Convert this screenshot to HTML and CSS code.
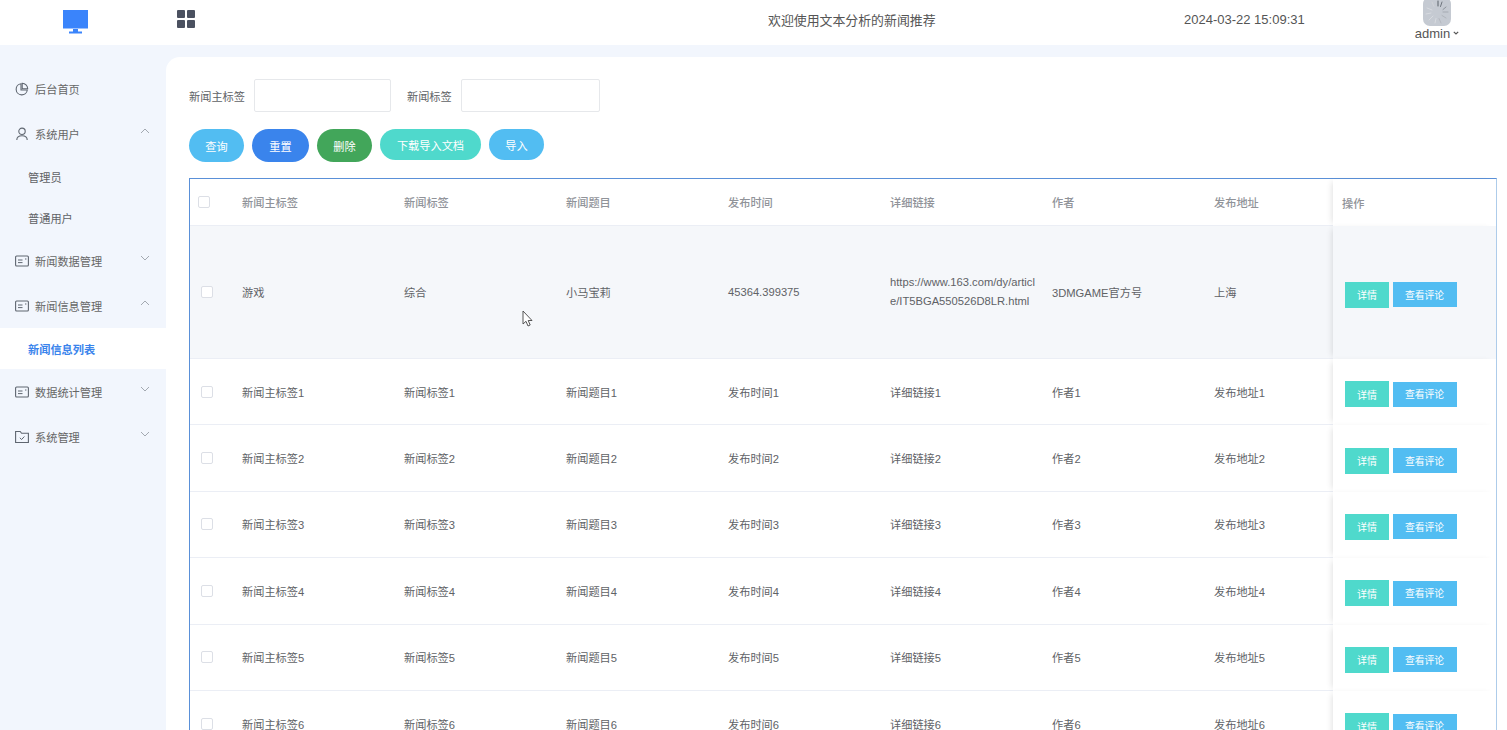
FILE: index.html
```html
<!DOCTYPE html>
<html lang="zh">
<head>
<meta charset="utf-8">
<title>欢迎使用文本分析的新闻推荐</title>
<link rel="stylesheet" href="styles.css">
</head>
<body>
<svg width="0" height="0" class="defs">
  <symbol id="card" viewBox="0 0 14 12"><rect x=".6" y="1" width="12.8" height="10" rx="1" fill="none" stroke="currentColor" stroke-width="1.1"/><path d="M3 5h4.5M3 7.6h4.5" stroke="currentColor" stroke-width="1"/><path d="M10 4h1.4" stroke="currentColor" stroke-width="1.2"/></symbol>
  <symbol id="up" viewBox="0 0 10 6"><path d="M1 5l4-4 4 4" fill="none" stroke="currentColor" stroke-width=".9"/></symbol>
  <symbol id="down" viewBox="0 0 10 6"><path d="M1 1l4 4 4-4" fill="none" stroke="currentColor" stroke-width=".9"/></symbol>
</svg>
<header class="topbar">
  <div class="logo">
    <svg width="26" height="26" viewBox="0 0 26 26"><rect x="0" y="0" width="25" height="18.500" fill="#3a84fb"/><path d="M10 19h5v2.500h4v2H6v-2h4z" fill="#3a84fb"/></svg>
  </div>
  <svg class="apps" width="18" height="18" viewBox="0 0 18 18"><g fill="#4b5160"><rect width="8" height="8" rx="1"/><rect x="10" width="8" height="8" rx="1"/><rect y="10" width="8" height="8" rx="1"/><rect x="10" y="10" width="8" height="8" rx="1"/></g></svg>
  <div class="title">欢迎使用文本分析的新闻推荐</div>
  <div class="clock">2024-03-22 15:09:31</div>
  <div class="user">
    <svg class="avatar" width="28" height="26" viewBox="0 0 28 26"><rect x="0" y="-3" width="28" height="29" rx="7" fill="#c5cad2"/><g stroke-width="1" stroke-linecap="round"><path d="M15 1v5" stroke="#596069"/><path d="M19 2l-1.500 4.500" stroke="#6f757e"/><path d="M23 7l-3 2.500" stroke="#8d939b"/><path d="M25 12h-5" stroke="#a5aab2"/><path d="M23 18l-4-2.500" stroke="#b0b5bc"/><path d="M18 23l-2-4.500" stroke="#b5b9c0"/><path d="M12 23l1-4.500" stroke="#d8dbe0"/><path d="M6 20l4-4" stroke="#d8dbe0"/><path d="M3 14l5-1" stroke="#d8dbe0"/><path d="M4 8l5 2" stroke="#d8dbe0"/><path d="M9 2l2 4.500" stroke="#d0d3d8"/></g></svg>
    <div class="uname">admin<svg class="caret" width="6" height="4" viewBox="0 0 6 4"><path d="M.8.800L3 3l2.200-2.200" fill="none" stroke="#555" stroke-width="1.200"/></svg></div>
  </div>
</header>
<div class="shell">
  <aside class="side">
    <a class="nav">
      <svg class="ic" width="14" height="14" viewBox="0 0 14 14"><path d="M6 1.700a5.600 5.600 0 1 0 6.300 6.300H6z" fill="none" stroke="currentColor" stroke-width="1.100"/><path d="M7.800.700a5.600 5.600 0 0 1 5.500 5.500H7.800z" fill="none" stroke="currentColor" stroke-width="1.100" transform="translate(-.6 .6)"/></svg>
      <span>后台首页</span>
    </a>
    <a class="nav">
      <svg class="ic" width="14" height="14" viewBox="0 0 14 14"><circle cx="7" cy="4.300" r="3.200" fill="none" stroke="currentColor" stroke-width="1.100"/><path d="M1.800 13c0-3 2-4.300 5.200-4.300s5.200 1.300 5.200 4.300" fill="none" stroke="currentColor" stroke-width="1.100"/></svg>
      <span>系统用户</span>
      <svg class="arrow"><use href="#up"/></svg>
    </a>
    <a class="sub">管理员</a>
    <a class="sub">普通用户</a>
    <a class="nav"><svg class="ic"><use href="#card"/></svg><span>新闻数据管理</span><svg class="arrow"><use href="#down"/></svg></a>
    <a class="nav"><svg class="ic"><use href="#card"/></svg><span>新闻信息管理</span><svg class="arrow"><use href="#up"/></svg></a>
    <a class="sub active">新闻信息列表</a>
    <a class="nav"><svg class="ic"><use href="#card"/></svg><span>数据统计管理</span><svg class="arrow"><use href="#down"/></svg></a>
    <a class="nav">
      <svg class="ic" width="14" height="14" viewBox="0 0 14 14"><path d="M.6 12.500V1.500h4.600l1.400 1.800h6.800v9.200z" fill="none" stroke="currentColor" stroke-width="1.100"/><path d="M4.800 7.800l1.800 1.700 2.800-3" fill="none" stroke="currentColor" stroke-width="1"/></svg>
      <span>系统管理</span>
      <svg class="arrow"><use href="#down"/></svg>
    </a>
  </aside>
  <main class="main">
    <form class="filters">
      <label class="flabel">新闻主标签</label>
      <input class="finput w1" type="text">
      <label class="flabel second">新闻标签</label>
      <input class="finput w2" type="text">
    </form>
    <div class="actions">
      <button class="btn sky" type="button">查询</button>
      <button class="btn blue wide" type="button">重置</button>
      <button class="btn green" type="button">删除</button>
      <button class="btn teal long" type="button">下载导入文档</button>
      <button class="btn sky short" type="button">导入</button>
    </div>
    <div class="table">
      <div class="row head">
        <div class="cell chk"><i class="box"></i></div>
        <div class="cell">新闻主标签</div><div class="cell">新闻标签</div><div class="cell">新闻题目</div><div class="cell">发布时间</div><div class="cell">详细链接</div><div class="cell">作者</div><div class="cell">发布地址</div>
        <div class="cell op">操作</div>
      </div>
      <div class="row tall hover">
        <div class="cell chk"><i class="box"></i></div>
        <div class="cell">游戏</div><div class="cell">综合</div><div class="cell">小马宝莉</div><div class="cell">45364.399375</div><div class="cell link">https://www.163.com/dy/article/IT5BGA550526D8LR.html</div><div class="cell">3DMGAME官方号</div><div class="cell">上海</div>
        <div class="cell op"><button class="mini tealb" type="button">详情</button><button class="mini skyb" type="button">查看评论</button></div>
      </div>
      <div class="row">
        <div class="cell chk"><i class="box"></i></div>
        <div class="cell">新闻主标签1</div><div class="cell">新闻标签1</div><div class="cell">新闻题目1</div><div class="cell">发布时间1</div><div class="cell">详细链接1</div><div class="cell">作者1</div><div class="cell">发布地址1</div>
        <div class="cell op"><button class="mini tealb" type="button">详情</button><button class="mini skyb" type="button">查看评论</button></div>
      </div>
      <div class="row">
        <div class="cell chk"><i class="box"></i></div>
        <div class="cell">新闻主标签2</div><div class="cell">新闻标签2</div><div class="cell">新闻题目2</div><div class="cell">发布时间2</div><div class="cell">详细链接2</div><div class="cell">作者2</div><div class="cell">发布地址2</div>
        <div class="cell op"><button class="mini tealb" type="button">详情</button><button class="mini skyb" type="button">查看评论</button></div>
      </div>
      <div class="row">
        <div class="cell chk"><i class="box"></i></div>
        <div class="cell">新闻主标签3</div><div class="cell">新闻标签3</div><div class="cell">新闻题目3</div><div class="cell">发布时间3</div><div class="cell">详细链接3</div><div class="cell">作者3</div><div class="cell">发布地址3</div>
        <div class="cell op"><button class="mini tealb" type="button">详情</button><button class="mini skyb" type="button">查看评论</button></div>
      </div>
      <div class="row">
        <div class="cell chk"><i class="box"></i></div>
        <div class="cell">新闻主标签4</div><div class="cell">新闻标签4</div><div class="cell">新闻题目4</div><div class="cell">发布时间4</div><div class="cell">详细链接4</div><div class="cell">作者4</div><div class="cell">发布地址4</div>
        <div class="cell op"><button class="mini tealb" type="button">详情</button><button class="mini skyb" type="button">查看评论</button></div>
      </div>
      <div class="row">
        <div class="cell chk"><i class="box"></i></div>
        <div class="cell">新闻主标签5</div><div class="cell">新闻标签5</div><div class="cell">新闻题目5</div><div class="cell">发布时间5</div><div class="cell">详细链接5</div><div class="cell">作者5</div><div class="cell">发布地址5</div>
        <div class="cell op"><button class="mini tealb" type="button">详情</button><button class="mini skyb" type="button">查看评论</button></div>
      </div>
      <div class="row">
        <div class="cell chk"><i class="box"></i></div>
        <div class="cell">新闻主标签6</div><div class="cell">新闻标签6</div><div class="cell">新闻题目6</div><div class="cell">发布时间6</div><div class="cell">详细链接6</div><div class="cell">作者6</div><div class="cell">发布地址6</div>
        <div class="cell op"><button class="mini tealb" type="button">详情</button><button class="mini skyb" type="button">查看评论</button></div>
      </div>
    </div>
  </main>
</div>
<svg class="pointer" width="12" height="18" viewBox="0 0 12 18"><path d="M1 1v13l3-2.700 2 4.700 2.200-1-2-4.500H10z" fill="#fff" stroke="#444" stroke-width=".9" stroke-linejoin="round"/></svg>
</body>
</html>
```
FILE: styles.css
```css
html, body {
  margin: 0;
  height: 100%;
  overflow: hidden;
  background: #f2f6fd;
  font-family: "Liberation Sans", "Noto Sans CJK SC", sans-serif;
  color: #606266;
}
.defs { position: absolute; }
.topbar {
  height: 45px;
  box-sizing: border-box;
  background: #fff;
  display: flex;
  align-items: center;
  padding-bottom: 7px;
}
.logo { width: 150px; display: flex; justify-content: center; padding-top: 8px; padding-left: 1px; box-sizing: border-box; }
.apps { margin-left: 27px; margin-top: -1px; }
.title { margin-left: 573px; width: 168px; font-size: 12.9px; white-space: nowrap; color: #555; }
.clock { margin-left: 248px; width: 120px; font-size: 13px; white-space: nowrap; color: #555; }
.user { margin-left: 103px; width: 60px; align-self: flex-start; display: flex; flex-direction: column; align-items: center; }
.avatar { display: block; margin-left: 0; }
.uname { font-size: 13px; line-height: 16px; color: #555; margin-top: 0; }
.caret { margin-left: 3px; vertical-align: 3px; }
.shell { display: flex; height: calc(100vh - 45px); }
.side { width: 166px; flex: none; padding-top: 21px; box-sizing: border-box; font-size: 11.2px; color: #666; }
.nav { height: 45px; display: flex; align-items: center; padding-left: 15px; position: relative; }
.nav span { white-space: nowrap; }
.ic { width: 14px; height: 14px; margin-right: 6px; flex: none; color: #5f6670; }
.arrow { width: 10px; height: 6px; color: #9aa0a8; position: absolute; left: 140px; top: 17px; }
.sub { height: 41px; display: flex; align-items: center; padding-left: 28px; color: #606266; }
.sub.active { background: #fff; color: #3a84ec; font-weight: 700; height: 41px; }
.main {
  flex: 1;
  min-width: 0;
  margin-top: 12px;
  background: #fff;
  border-top-left-radius: 14px;
  padding: 22px 10px 0 23px;
  font-size: 11.2px;
}
.filters { display: flex; align-items: center; height: 33px; }
.flabel { white-space: nowrap; color: #606266; }
.finput { height: 33px; box-sizing: border-box; border: 1px solid #e6e8eb; border-radius: 2px; background: #fff; margin-left: 9px; padding: 0; }
.w1 { width: 137px; }
.w2 { width: 139px; }
.flabel.second { margin-left: 16px; }
.actions { display: flex; gap: 8px; margin-top: 17px; align-items: flex-start; }
.btn { height: 33px; width: 55px; border: 0; border-radius: 17px; color: #fff; font: inherit; padding: 0; }
.btn.wide { width: 57px; }
.btn.long { width: 101px; height: 31px; }
.btn.short { height: 31px; }
.sky { background: #52bdf2; }
.blue { background: #3a84ec; }
.green { background: #42a65a; }
.teal { background: #4fd9cc; }
.table {
  margin-top: 16px;
  border: 1px solid #5a90d8;
  border-right-color: #aeccea;
  border-bottom: 0;
  width: 1308px;
  box-sizing: border-box;
}
.row {
  display: grid;
  grid-template-columns: 42px repeat(6, 162px) 129px 163px;
  height: 66.4px;
  box-sizing: border-box;
  border-bottom: 1px solid #ebeef5;
  background: #fff;
}
.row.head { height: 47px; color: #909399; font-weight: 500; }
.row.tall { height: 133px; }
.row.hover { background: #f5f7fa; }
.cell { display: flex; align-items: center; padding: 0 10px; white-space: nowrap; min-width: 0; }
.link { white-space: normal; word-break: break-all; line-height: 19px; padding-right: 6px; }
.chk { padding: 0 0 0 11px; }
.head .chk { padding-left: 8px; }
.box { width: 12px; height: 12px; box-sizing: border-box; border: 1px solid #dcdfe6; border-radius: 2px; background: #fff; display: block; }
.op { padding: 4px 0 0 12px; gap: 3.500px; box-shadow: -4px 0 6px -3px rgba(0, 0, 0, .12); background: inherit; margin-bottom: -1px; position: relative; }
.head .op { padding: 0 0 0 9px; }
.mini { border: 0; padding: 0; color: #fff; font: inherit; }
.tealb { width: 44px; height: 26px; background: #4fd9cc; font-size: 10px; }
.skyb { width: 64px; height: 25px; background: #52bdf2; font-size: 9.800px; }
.pointer { position: absolute; left: 522px; top: 310px; }
```
